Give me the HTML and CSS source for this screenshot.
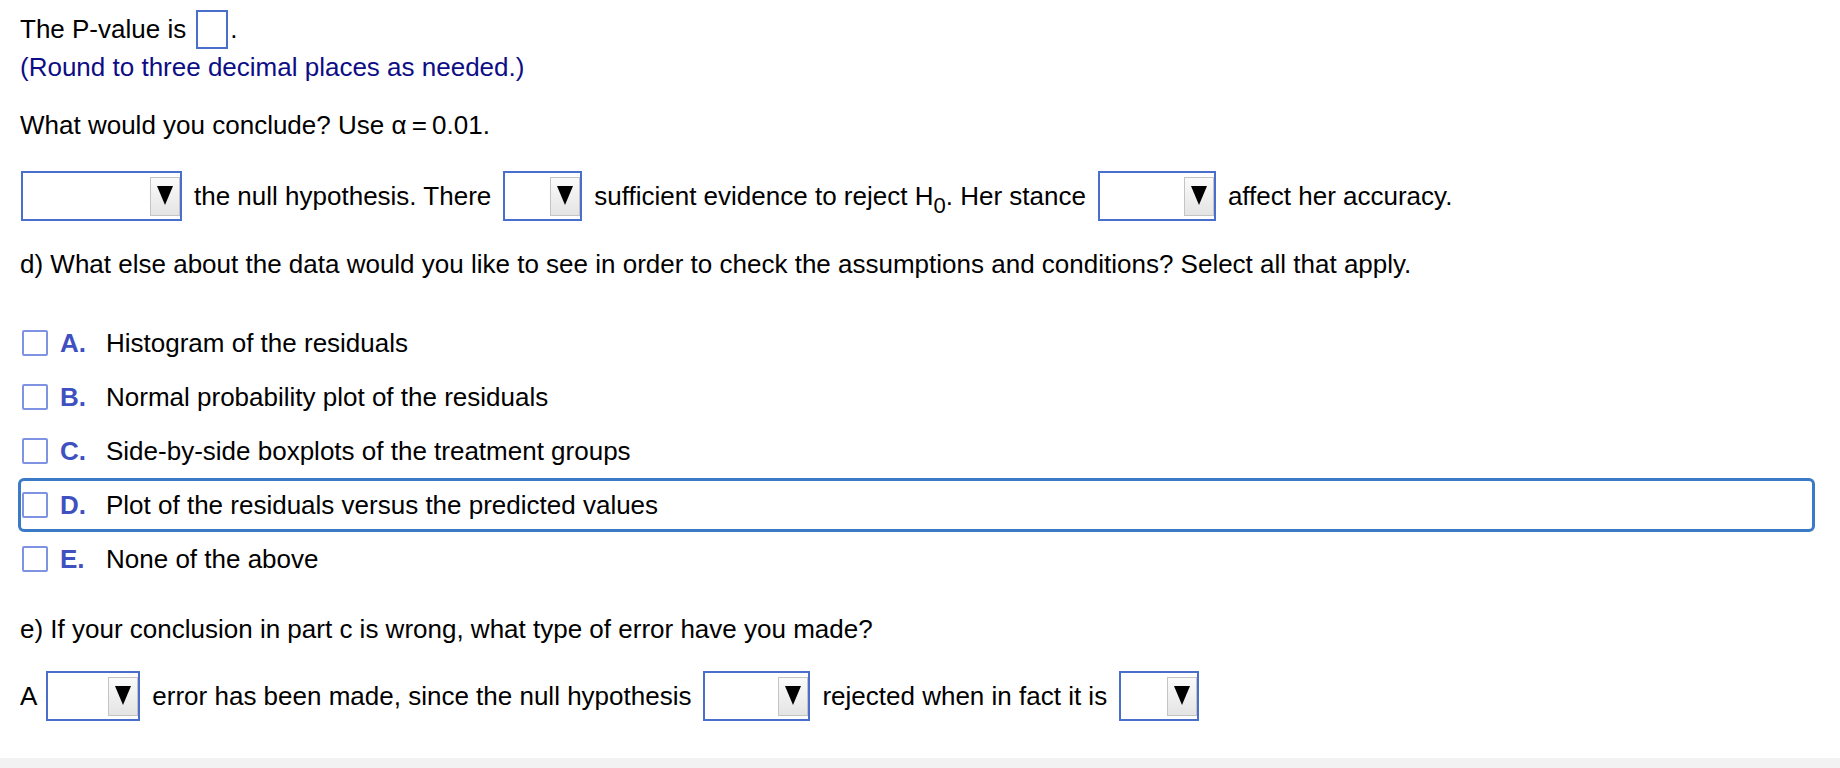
FILE: index.html
```html
<!DOCTYPE html>
<html>
<head>
<meta charset="utf-8">
<link rel="stylesheet" href="styles.css">
</head>
<body>
<div class="page">
  <div class="content">
    <div class="line l1"><span>The P-value is</span><span class="answer"></span><span>.</span></div>
    <div class="line hint">(Round to three decimal places as needed.)</div>
    <div class="line l3">What would you conclude? Use α&#8201;=&#8201;0.01.</div>

    <div class="row r-drop">
      <span class="dd" style="width:161px"><span class="btn"><span class="tri"></span></span></span>
      <span>the null hypothesis. There</span>
      <span class="dd" style="width:79px"><span class="btn"><span class="tri"></span></span></span>
      <span>sufficient evidence to reject H<sub class="sub">0</sub>. Her stance</span>
      <span class="dd" style="width:118px"><span class="btn"><span class="tri"></span></span></span>
      <span>affect her accuracy.</span>
    </div>

    <div class="line qd">d) What else about the data would you like to see in order to check the assumptions and conditions? Select all that apply.</div>

    <div class="options">
      <div class="opt"><span class="cb"></span><span class="letter">A.</span><span>Histogram of the residuals</span></div>
      <div class="opt"><span class="cb"></span><span class="letter">B.</span><span>Normal probability plot of the residuals</span></div>
      <div class="opt"><span class="cb"></span><span class="letter">C.</span><span>Side-by-side boxplots of the treatment groups</span></div>
      <div class="opt focus"><span class="cb"></span><span class="letter">D.</span><span>Plot of the residuals versus the predicted values</span></div>
      <div class="opt"><span class="cb"></span><span class="letter">E.</span><span>None of the above</span></div>
    </div>

    <div class="line qe">e) If your conclusion in part c is wrong, what type of error have you made?</div>

    <div class="row r-last">
      <span class="a-word">A</span>
      <span class="dd" style="width:94px"><span class="btn"><span class="tri"></span></span></span>
      <span>error has been made, since the null hypothesis</span>
      <span class="dd" style="width:107px"><span class="btn"><span class="tri"></span></span></span>
      <span>rejected when in fact it is</span>
      <span class="dd" style="width:80px"><span class="btn"><span class="tri"></span></span></span>
    </div>
  </div>
  <div class="footer"></div>
</div>
</body>
</html>
```

FILE: styles.css
```css
html, body {
  margin: 0;
  padding: 0;
  background: #ffffff;
}
body {
  font-family: "Liberation Sans", Arial, Helvetica, sans-serif;
  font-size: 26px;
  color: #000000;
}
.page {
  height: 768px;
  display: flex;
  flex-direction: column;
}
.content {
  flex: 1;
  padding-left: 20px;
}
.footer {
  height: 10px;
  background: #f2f2f2;
}
.line {
  display: flex;
  align-items: center;
  white-space: nowrap;
}
.l1 {
  height: 40px;
  margin-top: 9px;
  gap: 10px;
}
.l1 .answer {
  width: 28px;
  height: 35px;
  border: 2px solid #4a6fcb;
}
.l1 span:last-child {
  margin-left: -8px;
}
.hint {
  height: 30px;
  margin-top: 3px;
  color: #0d0d86;
}
.l3 {
  height: 30px;
  margin-top: 28px;
}
.row {
  display: flex;
  align-items: center;
  gap: 12px;
  white-space: nowrap;
}
.r-drop {
  height: 50px;
  margin-top: 31px;
  margin-left: 1px;
}
.dd {
  box-sizing: border-box;
  height: 50px;
  border: 2px solid #4a6fcb;
  display: flex;
  justify-content: flex-end;
  align-items: center;
  background: #fff;
}
.btn {
  box-sizing: border-box;
  width: 30px;
  height: 39px;
  border: 1px solid #c4c4c4;
  background: linear-gradient(#fbfbfb, #e4e4e4);
  display: flex;
  justify-content: center;
  align-items: center;
}
.tri {
  width: 0;
  height: 0;
  border-left: 8px solid transparent;
  border-right: 8px solid transparent;
  border-top: 19px solid #000;
  margin-top: -2px;
}
.sub {
  font-size: 0.85em;
  vertical-align: -0.35em;
  line-height: 0;
}
.qd {
  height: 30px;
  margin-top: 28px;
}
.options {
  margin-top: 37px;
  margin-left: -2px;
}
.opt {
  box-sizing: border-box;
  height: 54px;
  width: 1797px;
  display: flex;
  align-items: center;
  padding-left: 4px;
  border: 3px solid transparent;
  border-radius: 6px;
  white-space: nowrap;
}
.opt.focus {
  border-color: #3b7ac6;
}
.cb {
  box-sizing: border-box;
  width: 26px;
  height: 26px;
  border: 2px solid #8092e2;
  border-radius: 2px;
  margin-left: -3px;
  flex: none;
}
.letter {
  font-weight: bold;
  color: #3f50c0;
  width: 46px;
  margin-left: 12px;
}
.qe {
  height: 30px;
  margin-top: 28px;
}
.r-last {
  height: 50px;
  margin-top: 27px;
  gap: 12px;
}
.a-word {
  margin-right: -3px;
}
```
